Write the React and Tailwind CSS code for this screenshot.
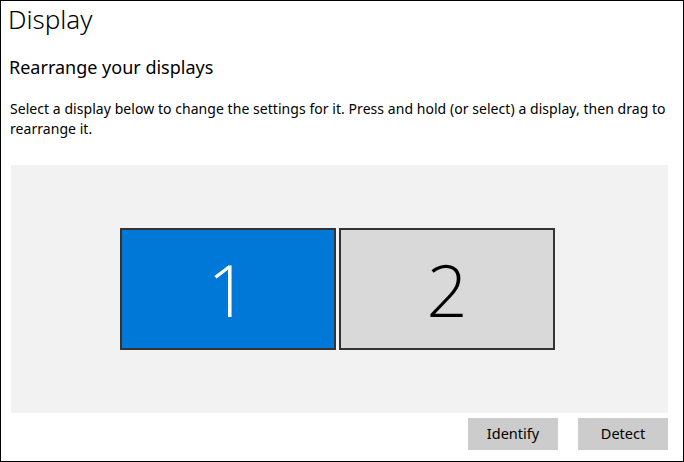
export default function App() {
    return (
        <div className="w-[684px] h-[462px] border border-black bg-white text-black font-['Noto_Sans',sans-serif] flex flex-col">
            {/* Header */}
            <h1 className="pl-[7px] pt-[1px] text-[26px] leading-[34px] font-light">Display</h1>
            <h2 className="pl-[8px] mt-[19px] text-[18px] leading-[24px] font-normal">Rearrange your displays</h2>
            <p className="pl-[9px] pr-[8px] mt-[20px] text-[14px] leading-[20px] tracking-[0.05px]">
                Select a display below to change the settings for it. Press and hold (or select) a display, then drag to rearrange it.
            </p>

            {/* Arrangement canvas */}
            <div className="ml-[10px] mt-[26px] w-[657px] h-[248px] bg-[#f2f2f2] flex items-center justify-center gap-[3px] pr-[4px]">
                <div className="w-[216px] h-[122px] bg-[#0078d7] border-2 border-[#333333] flex items-center justify-center text-white">
                    <span className="text-[72px] leading-none font-extralight font-['Open_Sans',sans-serif]">1</span>
                </div>
                <div className="w-[216px] h-[122px] bg-[#d9d9d9] border-2 border-[#333333] flex items-center justify-center text-black">
                    <span className="text-[72px] leading-none font-extralight font-['Open_Sans',sans-serif]">2</span>
                </div>
            </div>

            {/* Actions */}
            <div className="flex justify-end gap-[20px] pr-[15px] mt-[5px]">
                <button className="w-[90px] h-[32px] bg-[#cccccc] text-[14.5px]">Identify</button>
                <button className="w-[90px] h-[32px] bg-[#cccccc] text-[14.5px]">Detect</button>
            </div>
        </div>
    );
}
